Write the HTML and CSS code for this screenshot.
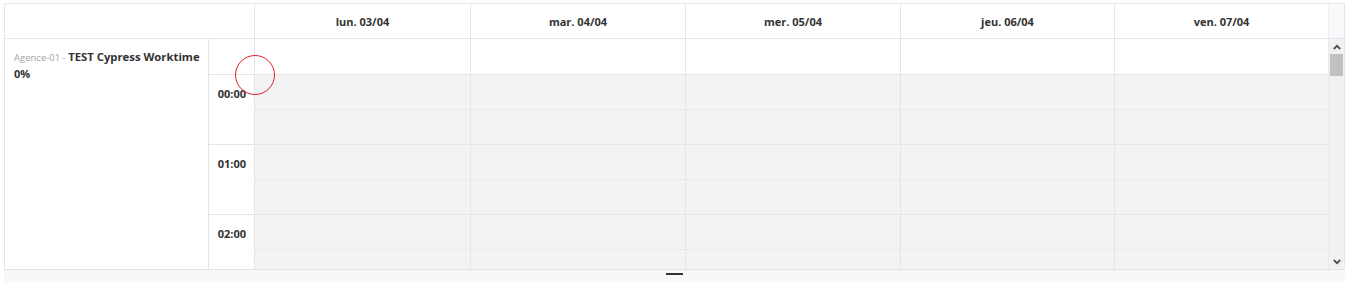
FILE: index.html
```html
<!DOCTYPE html>
<html lang="fr">
<head>
<meta charset="utf-8">
<link rel="stylesheet" href="styles.css">
</head>
<body>
<div class="page">
  <div class="calendar">
    <div class="head">
      <div class="head-corner"></div>
      <div class="head-day">lun. 03/04</div>
      <div class="head-day">mar. 04/04</div>
      <div class="head-day">mer. 05/04</div>
      <div class="head-day">jeu. 06/04</div>
      <div class="head-day">ven. 07/04</div>
      <div class="head-spacer"></div>
    </div>
    <div class="body">
      <div class="resource">
        <div class="res-name"><span class="res-agency">Agence-01 - </span><b>TEST Cypress Worktime</b></div>
        <div class="res-pct">0%</div>
      </div>
      <div class="times">
        <div class="time-top"></div>
        <div class="time-slot">00:00</div>
        <div class="time-slot">01:00</div>
        <div class="time-slot">02:00</div>
      </div>
      <div class="days">
        <div class="day"><div class="allday"></div><div class="hour"></div><div class="hour"></div><div class="hour"></div></div>
        <div class="day"><div class="allday"></div><div class="hour"></div><div class="hour"></div><div class="hour"></div></div>
        <div class="day"><div class="allday"></div><div class="hour"></div><div class="hour"></div><div class="hour"></div></div>
        <div class="day"><div class="allday"></div><div class="hour"></div><div class="hour"></div><div class="hour"></div></div>
        <div class="day"><div class="allday"></div><div class="hour"></div><div class="hour"></div><div class="hour"></div></div>
      </div>
      <div class="scrollbar">
        <div class="sb-arrow sb-up">
          <svg width="8" height="6" viewBox="0 0 8 6"><path d="M0.8 5 L4 1.8 L7.2 5" fill="none" stroke="#505050" stroke-width="1.8"/></svg>
        </div>
        <div class="sb-thumb"></div>
        <div class="sb-track"></div>
        <div class="sb-arrow sb-down">
          <svg width="8" height="6" viewBox="0 0 8 6"><path d="M0.8 1 L4 4.2 L7.2 1" fill="none" stroke="#505050" stroke-width="1.8"/></svg>
        </div>
      </div>
    </div>
    <div class="cursor-ring"></div>
  </div>
  <div class="footer">
    <div class="handle"></div>
  </div>
</div>
</body>
</html>
```

FILE: styles.css
```css
html, body {
  margin: 0;
  padding: 0;
  background: #ffffff;
}

body {
  font-family: "Open Sans", "Liberation Sans", sans-serif;
  color: #333333;
}

.page {
  padding: 3px 4px 0 4px;
  width: 1341px;
}

.calendar {
  position: relative;
  border: 1px solid #e3e6ea;
  border-bottom: 1px solid #dfe2e6;
  background: #ffffff;
}

.head {
  display: grid;
  grid-template-columns: 250px 216px 215px 215px 214px 1fr 16px;
  height: 34px;
  border-bottom: 1px solid #e3e6ea;
}

.head-corner {
  border-right: 1px solid #e3e6ea;
}

.head-day {
  border-right: 1px solid #e3e6ea;
  display: flex;
  align-items: center;
  justify-content: center;
  font-size: 11px;
  font-weight: 700;
  color: #333333;
  padding-top: 1px;
}

.head-day:nth-child(6) {
  border-right: none;
}

.head-spacer {
  background: #f8f9fb;
  border-left: 1px solid #eef0f3;
}

.body {
  display: flex;
  height: 230px;
  overflow: hidden;
}

.resource {
  flex: none;
  border-right: 1px solid #e3e6ea;
  padding: 9px 0 0 9px;
  box-sizing: border-box;
  width: 204px;
}

.res-name {
  line-height: 14px;
  white-space: nowrap;
}

.res-agency {
  font-size: 9.5px;
  color: #a3a3a3;
}

.res-name b {
  font-size: 11.3px;
  font-weight: 700;
  color: #333333;
}

.res-pct {
  font-size: 11px;
  font-weight: 700;
  line-height: 14px;
  margin-top: 2px;
}

.times {
  width: 46px;
  flex: none;
  border-right: 1px solid #e3e6ea;
  box-sizing: border-box;
}

.time-top {
  height: 35px;
  border-bottom: 1px solid #e3e6ea;
}

.time-slot {
  border-bottom: 1px solid #e3e6ea;
  font-size: 11px;
  font-weight: 700;
  color: #333333;
  text-align: right;
  padding: 12px 8px 0 0;
  line-height: 14px;
  height: 57px;
}

.days {
  flex: 1;
  display: grid;
  grid-template-columns: 216px 215px 215px 214px 1fr;
}

.day {
  border-right: 1px solid #e3e6ea;
}

.day:last-child {
  border-right: 1px solid #e8eaee;
}

.allday {
  height: 35px;
  background: #ffffff;
  border-bottom: 1px solid #e3e6ea;
}

.hour {
  height: 69px;
  background: #f3f3f3;
  border-bottom: 1px solid #e6e6e6;
  position: relative;
}

.hour::after {
  content: "";
  position: absolute;
  left: 0;
  right: 0;
  top: 34px;
  border-top: 1px dotted #e2e2e2;
}

.scrollbar {
  width: 15px;
  flex: none;
  background: #f1f1f1;
  display: flex;
  flex-direction: column;
}

.sb-arrow {
  height: 15px;
  display: flex;
  align-items: center;
  justify-content: center;
  flex: none;
}

.sb-thumb {
  height: 22px;
  margin: 0 1px;
  background: #c1c1c1;
  flex: none;
}

.sb-track {
  flex: 1;
}

.cursor-ring {
  position: absolute;
  left: 230px;
  top: 51px;
  width: 40px;
  height: 40px;
  border: 1px solid #e0202a;
  border-radius: 50%;
  box-sizing: border-box;
  pointer-events: none;
}

.footer {
  height: 12px;
  background: #f7f8fa;
  display: flex;
  justify-content: center;
  padding-top: 3px;
  box-sizing: border-box;
}

.handle {
  width: 17px;
  height: 2px;
  background: #333333;
}
```
